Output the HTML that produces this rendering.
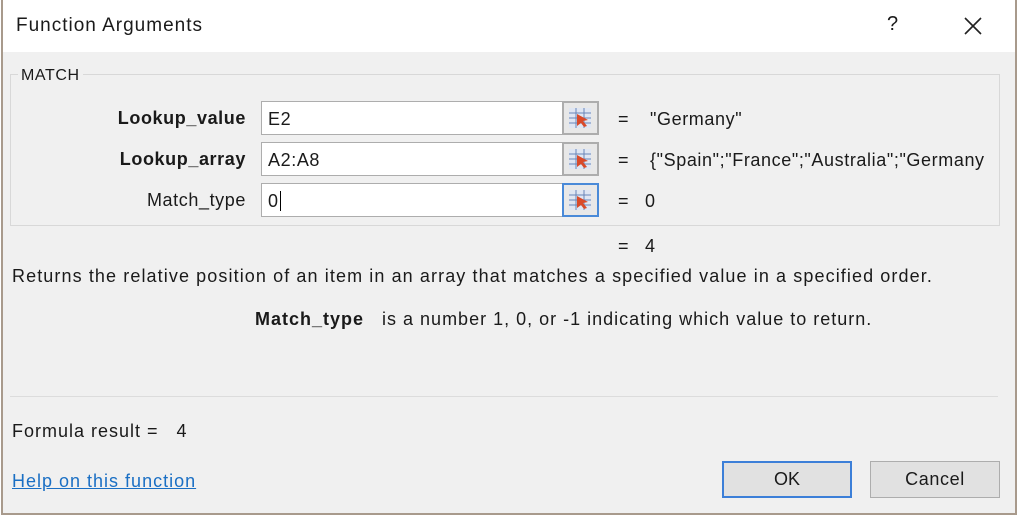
<!DOCTYPE html>
<html><head><style>
body{margin:0;width:1024px;height:520px;background:#fff;font-family:"Liberation Sans",sans-serif;color:#1a1a1a;position:relative;overflow:hidden}
.win{position:absolute;left:1px;top:0;width:1012px;height:513px;border-left:2px solid #a89a8c;border-right:2px solid #a89a8c;border-bottom:2px solid #a89a8c;background:#f0f0f0}
.title{position:absolute;left:0;top:0;width:1012px;height:52px;background:#fff}
.t{position:absolute;white-space:nowrap;font-size:18px;letter-spacing:0.6px}
.grp{position:absolute;left:10px;top:74px;width:988px;height:150px;border:1px solid #d8d8d8}
.inp{position:absolute;left:261px;width:300px;height:32px;background:#fff;border:1px solid #adadad;border-right:none}
.btn{position:absolute;left:562px;width:37px;height:34px;border:2px solid #adadad;background:#e8e8e8;box-sizing:border-box}
.b{font-weight:bold}
</style></head><body>
<div class="win">
<div class="title"></div>
</div>
<div class="t" style="left:16px;top:15px;font-size:19px;letter-spacing:1px">Function Arguments</div>
<div class="t" style="left:887px;top:13px;font-size:20px">?</div>
<svg style="position:absolute;left:963px;top:16px" width="20" height="20"><path d="M2 2L18 18M18 2L2 18" stroke="#222" stroke-width="1.6"/></svg>
<div class="grp"></div>
<div class="t" style="left:18px;top:67px;background:#f0f0f0;padding:0 3px;font-size:16px">MATCH</div>

<div class="t b" style="right:778px;top:108px">Lookup_value</div>
<div class="t b" style="right:778px;top:149px">Lookup_array</div>
<div class="t" style="right:778px;top:190px">Match_type</div>

<div class="inp" style="top:101px"></div><div class="t" style="left:268px;top:109px">E2</div>
<div class="inp" style="top:142px"></div><div class="t" style="left:268px;top:150px">A2:A8</div>
<div class="inp" style="top:183px"></div><div class="t" style="left:268px;top:191px">0<span style="border-left:1px solid #000;margin-left:1px"></span></div>

<div class="btn" style="top:101px"></div>
<div class="btn" style="top:142px"></div>
<div class="btn" style="top:183px;border-color:#4a8ad8"></div>
<svg style="position:absolute;left:569px;top:108px" width="24" height="120">
<defs><g id="ic"><rect x="0" y="0" width="22" height="20" fill="#dfe6f3"/><path d="M0 5H22M0 10H22M0 15H22M7 0V20M15 0V20" stroke="#6a86b8" stroke-width="1"/><path d="M8 6L19 12L14 13L18 18L15 19L12 15L8 18Z" fill="#d94a2a"/></g></defs>
<use href="#ic" y="0"/><use href="#ic" y="41"/><use href="#ic" y="82"/>
</svg>

<div class="t" style="left:618px;top:109px">=</div><div class="t" style="left:650px;top:109px">"Germany"</div>
<div class="t" style="left:618px;top:150px">=</div><div class="t" style="left:650px;top:150px">{"Spain";"France";"Australia";"Germany</div>
<div class="t" style="left:618px;top:191px">=</div><div class="t" style="left:645px;top:191px">0</div>
<div class="t" style="left:618px;top:236px">=</div><div class="t" style="left:645px;top:236px">4</div>

<div class="t" style="left:12px;top:266px;letter-spacing:1.1px">Returns the relative position of an item in an array that matches a specified value in a specified order.</div>
<div class="t" style="left:255px;top:309px;letter-spacing:1px"><b>Match_type</b>&nbsp;&nbsp; is a number 1, 0, or -1 indicating which value to return.</div>

<div style="position:absolute;left:10px;top:396px;width:988px;border-top:1px solid #dcdcdc"></div>
<div class="t" style="left:12px;top:421px;letter-spacing:1px">Formula result =&nbsp;&nbsp; 4</div>
<div class="t" style="left:12px;top:471px;color:#1a6fc4;text-decoration:underline;letter-spacing:1px">Help on this function</div>

<div style="position:absolute;left:722px;top:461px;width:130px;height:37px;border:2px solid #3c7fd8;background:#e1e1e1;box-sizing:border-box;text-align:center;line-height:33px;font-size:18px">OK</div>
<div style="position:absolute;left:870px;top:461px;width:130px;height:37px;border:1px solid #adadad;background:#e1e1e1;box-sizing:border-box;text-align:center;line-height:35px;font-size:18px;letter-spacing:0.6px">Cancel</div>
</body></html>
